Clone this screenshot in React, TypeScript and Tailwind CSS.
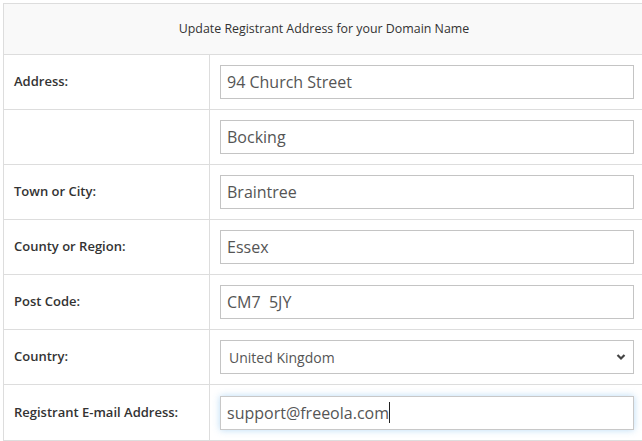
import React from "react";

const font = { fontFamily: '"Open Sans", "Noto Sans", sans-serif' };

function Row({ label, children, last }: { label: string; children: React.ReactNode; last?: boolean }) {
  return (
    <div className={`flex h-[55px] ${last ? "h-[54px]" : "border-b border-[#dddddd]"}`}>
      <div className="w-[206px] shrink-0 border-r border-[#dddddd] flex items-center pl-[10px] text-[13px] font-semibold text-[#333333]">
        {label}
      </div>
      <div className="flex-1 flex items-center px-[10px]">{children}</div>
    </div>
  );
}

function TextInput({ value }: { value: string }) {
  return (
    <input
      readOnly
      value={value}
      className="w-[414px] h-[34px] border border-[#c4c4c4] bg-white px-[6px] text-[16px] text-[#555555] outline-none"
      style={font}
    />
  );
}

export default function App() {
  return (
    <div className="w-[642px] h-[441px] overflow-hidden bg-white" style={font}>
      <div className="w-[642px] ml-[3px] mt-[3px] border border-[#dddddd]">
        <div className="h-[51px] bg-[#f9f9f9] border-b border-[#dddddd] flex items-center justify-center text-[12.4px] font-medium text-[#333333]">
          Update Registrant Address for your Domain Name
        </div>
        <Row label="Address:">
          <TextInput value="94 Church Street" />
        </Row>
        <Row label="">
          <TextInput value="Bocking" />
        </Row>
        <Row label="Town or City:">
          <TextInput value="Braintree" />
        </Row>
        <Row label="County or Region:">
          <TextInput value="Essex" />
        </Row>
        <Row label="Post Code:">
          <TextInput value="CM7  5JY" />
        </Row>
        <Row label="Country:">
          <div className="relative w-[414px] h-[34px]">
            <select
              defaultValue="United Kingdom"
              className="appearance-none w-full h-full border border-[#c4c4c4] bg-white pl-[8px] text-[14px] text-[#555555] outline-none"
              style={font}
            >
              <option>United Kingdom</option>
            </select>
            <svg
              className="absolute right-[8px] top-[13px] pointer-events-none"
              width="10"
              height="8"
              viewBox="0 0 10 8"
            >
              <path d="M1.5 2 L5 5.5 L8.5 2" fill="none" stroke="#444444" strokeWidth="2.2" />
            </svg>
          </div>
        </Row>
        <Row label="Registrant E-mail Address:" last>
          <div className="w-[414px] h-[34px] border border-[#c8c8c8] bg-white px-[6px] flex items-center text-[16px] text-[#555555] shadow-[0_0_7px_rgba(102,175,233,0.45)]">
            <span>support@freeola.com</span>
            <span className="inline-block w-px h-[21px] bg-[#222222]" />
          </div>
        </Row>
      </div>
    </div>
  );
}
